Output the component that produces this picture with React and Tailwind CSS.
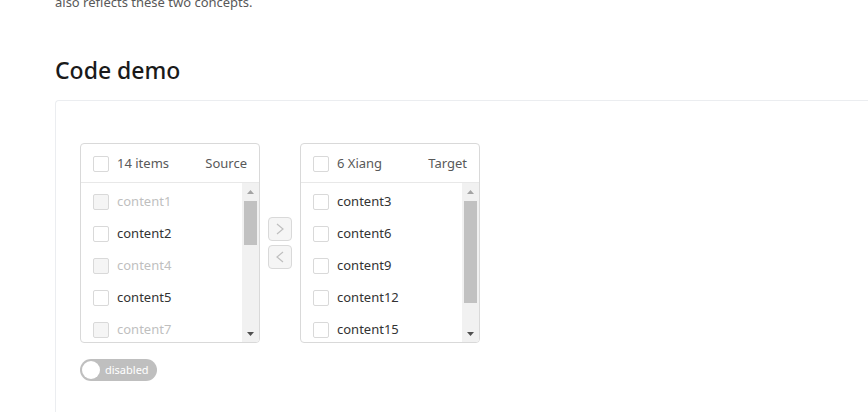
import React from 'react'

const font = { fontFamily: '"Noto Sans", "Open Sans", sans-serif' }

const sourceItems = [
  { label: 'content1', disabled: true },
  { label: 'content2' },
  { label: 'content4', disabled: true },
  { label: 'content5' },
  { label: 'content7', disabled: true },
]

const targetItems = [
  { label: 'content3' },
  { label: 'content6' },
  { label: 'content9' },
  { label: 'content12' },
  { label: 'content15' },
]

function Checkbox({ disabled }) {
  return (
    <span
      className={
        'inline-block h-4 w-4 shrink-0 rounded-[2px] border border-[#d9d9d9] ' +
        (disabled ? 'bg-[#f5f5f5]' : 'bg-white')
      }
    />
  )
}

function Scrollbar({ thumbTop, thumbHeight }) {
  return (
    <div className="flex w-[17px] shrink-0 flex-col items-center bg-[#f1f1f1]">
      <div className="flex h-[17px] w-full items-center justify-center">
        <svg width="7" height="4" viewBox="0 0 7 4">
          <path d="M0 4 L3.5 0 L7 4 Z" fill="#a3a3a3" />
        </svg>
      </div>
      <div className="relative w-full flex-1">
        <div
          className="mx-auto w-[13px] bg-[#c1c1c1]"
          style={{ marginTop: thumbTop, height: thumbHeight }}
        />
      </div>
      <div className="flex h-[17px] w-full items-center justify-center">
        <svg width="7" height="4" viewBox="0 0 7 4">
          <path d="M0 0 L3.5 4 L7 0 Z" fill="#505050" />
        </svg>
      </div>
    </div>
  )
}

function Panel({ count, title, items, thumbHeight }) {
  return (
    <div className="flex h-[200px] w-[180px] flex-col overflow-hidden rounded border border-[#d9d9d9] bg-white">
      <div className="flex h-[39px] shrink-0 items-center border-b border-[#e8e8e8] px-3 pt-[1px] text-[13px] text-[#595959]">
        <Checkbox />
        <span className="ml-2">{count}</span>
        <span className="ml-auto">{title}</span>
      </div>
      <div className="flex min-h-0 flex-1">
        <ul className="min-w-0 flex-1 overflow-hidden pt-[3px]">
          {items.map((it) => (
            <li
              key={it.label}
              className={
                'flex h-8 items-center px-3 text-[13px] ' +
                (it.disabled ? 'text-[#bfbfbf]' : 'text-[#333]')
              }
            >
              <Checkbox disabled={it.disabled} />
              <span className="ml-2">{it.label}</span>
            </li>
          ))}
        </ul>
        <Scrollbar thumbTop={1} thumbHeight={thumbHeight} />
      </div>
    </div>
  )
}

function ArrowButton({ dir }) {
  return (
    <button className="flex h-6 w-6 items-center justify-center rounded border border-[#d9d9d9] bg-[#f5f5f5]">
      <svg width="8" height="12" viewBox="0 0 8 12" fill="none" stroke="#bfbfbf" strokeWidth="1.2">
        {dir === 'right' ? <path d="M1 1 L7 6 L1 11" /> : <path d="M7 1 L1 6 L7 11" />}
      </svg>
    </button>
  )
}

export default function App() {
  return (
    <div className="h-[412px] w-full overflow-hidden bg-white pl-[55px]" style={font}>
      <p className="-mt-[9px] text-[13px] leading-[22px] text-[#595959]">
        also reflects these two concepts.
      </p>
      <h2 className="mt-[41px] text-[23px] font-medium leading-8 text-[#1a1a1a]">Code demo</h2>
      <div className="mt-[14px] h-[400px] w-[900px] rounded-tl border-l border-t border-[#ebedf0] pl-[24px] pt-[42px]">
        <div className="flex items-center gap-[8px]">
          <Panel count="14 items" title="Source" items={sourceItems} thumbHeight={44} />
          <div className="flex flex-col gap-[4px] px-[0px]">
            <ArrowButton dir="right" />
            <ArrowButton dir="left" />
          </div>
          <Panel count="6 Xiang" title="Target" items={targetItems} thumbHeight={102} />
        </div>
        <div className="mt-4 flex h-[22px] w-[77px] items-center rounded-full bg-[#bfbfbf] px-[2px]">
          <span className="h-[18px] w-[18px] rounded-full bg-white" />
          <span className="ml-[5px] text-[11px] text-white">disabled</span>
        </div>
      </div>
    </div>
  )
}
